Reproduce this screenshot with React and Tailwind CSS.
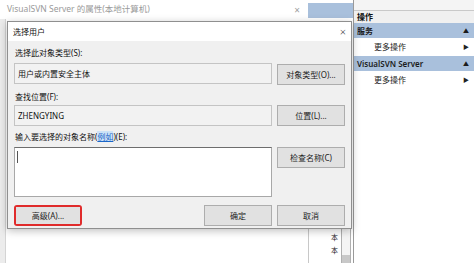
import React from "react";

const F = { fontFamily: "'Noto Sans','Noto Sans CJK SC',sans-serif" };

function Btn({ children, className = "" }) {
  return (
    <div
      className={`flex h-[21px] w-[68px] items-center justify-center border border-[#adadad] bg-[#e1e1e1] text-[8px] text-[#222] ${className}`}
    >
      {children}
    </div>
  );
}

function ReadBox({ children }) {
  return (
    <div className="flex h-[21px] w-[258px] items-center border border-[#c4c4c4] bg-[#f2f2f2] pl-[3px] text-[8px] text-[#111]">
      {children}
    </div>
  );
}

export default function App() {
  return (
    <div
      className="relative flex h-[263px] w-[474px] overflow-hidden bg-white leading-none"
      style={F}
    >
      {/* background window */}
      <div className="flex w-[353px] flex-col">
        <div className="flex h-[19px] items-center bg-white">
          <div className="w-[308px] pl-[7px] text-[8.5px] text-[#9a9a9a] flex items-center justify-between pr-[8px]">
            <span>VisualSVN Server 的属性(本地计算机)</span>
            <span className="text-[10px] text-[#a0a0a0]">×</span>
          </div>
          <div className="mt-[2px] h-[15px] flex-1 bg-[#a9c0dc]" />
        </div>
        <div className="flex flex-1">
          <div className="w-[6px] border-r border-[#d4d4d4] bg-[#ececec]" />
          <div className="flex flex-1 items-end justify-end bg-white">
            <div className="flex h-[34px] w-[45px] border-l border-[#c8c8c8]">
              <div className="flex flex-1 flex-col items-end gap-[6px] pr-[3px] pt-[5px] text-[7px] text-[#222]">
                <span>本</span>
                <span>本</span>
              </div>
              <div className="flex w-[10px] flex-col justify-end border-x border-[#b0b0b0] bg-[#f4f4f4]">
                <div className="h-[8px] bg-[#c8c8c8]" />
              </div>
              <div className="w-[2px]" />
            </div>
          </div>
        </div>
      </div>

      {/* right actions pane */}
      <div className="flex w-[121px] flex-col border-l border-[#9a9a9a] bg-white">
        <div className="h-[10px] bg-[#f4f4f4]" />
        <div className="flex h-[13px] items-center border-t border-[#c9c9c9] bg-[#f0f0f0] pl-[3px] text-[8px] font-bold text-[#111]">
          操作
        </div>
        <div className="flex h-[15px] items-center justify-between bg-[#a9c0dc] pl-[3px] pr-[5px] text-[8px] font-semibold text-[#1b1b1b]">
          <span>服务</span>
          <span className="text-[6px]">▲</span>
        </div>
        <div className="flex h-[18px] items-center justify-between pl-[20px] pr-[5px] text-[8px] text-[#222]">
          <span>更多操作</span>
          <span className="text-[6px]">▶</span>
        </div>
        <div className="flex h-[15px] items-center justify-between bg-[#a9c0dc] pl-[3px] pr-[5px] text-[8px] font-semibold text-[#1b1b1b]">
          <span>VisualSVN Server</span>
          <span className="text-[6px]">▲</span>
        </div>
        <div className="flex h-[18px] items-center justify-between pl-[20px] pr-[5px] text-[8px] text-[#222]">
          <span>更多操作</span>
          <span className="text-[6px]">▶</span>
        </div>
      </div>

      {/* dialog window */}
      <div className="absolute left-[7px] top-[21px] flex h-[208px] w-[345px] flex-col border border-[#8f8f8f] bg-[#f0f0f0] shadow-[0_2px_8px_rgba(0,0,0,0.25)]">
        <div className="flex h-[19px] items-center justify-between bg-white pl-[5px] pr-[5px] text-[8px] text-[#111]">
          <span>选择用户</span>
          <span className="text-[11px] font-light text-[#333]">×</span>
        </div>
        <div className="flex flex-1 flex-col px-[6px] pt-[8px] text-[8px] text-[#111]">
          <div className="pl-[1px]">选择此对象类型(S):</div>
          <div className="mt-[6px] flex items-start justify-between">
            <ReadBox>用户或内置安全主体</ReadBox>
            <Btn className="mt-[1px]">对象类型(O)...</Btn>
          </div>
          <div className="mt-[8px] pl-[1px]">查找位置(F):</div>
          <div className="mt-[4px] flex items-start justify-between">
            <ReadBox>ZHENGYING</ReadBox>
            <Btn>位置(L)...</Btn>
          </div>
          <div className="mt-[7px] pl-[1px]">
            输入要选择的对象名称(
            <span className="bg-[#cde3f7] text-[#1a66c8] underline">例如</span>
            )(E):
          </div>
          <div className="mt-[6px] flex items-start justify-between">
            <div className="h-[50px] w-[258px] border border-[#a8a8a8] border-t-[#6d6d6d] bg-white pl-[2px] pt-[3px]">
              <div className="h-[12px] w-[1px] bg-[#555]" />
            </div>
            <Btn>检查名称(C)</Btn>
          </div>
          <div className="mt-[8px] flex items-center justify-between">
            <div className="rounded-[3px] border-[2px] border-[#e02b2b] p-0">
              <div className="flex h-[17px] w-[64px] items-center justify-center bg-[#e1e1e1] text-[8px] text-[#222]">
                高级(A)...
              </div>
            </div>
            <div className="flex gap-[5px]">
              <Btn className="w-[57px]">确定</Btn>
              <Btn className="w-[57px]">取消</Btn>
            </div>
          </div>
        </div>
      </div>
    </div>
  );
}
